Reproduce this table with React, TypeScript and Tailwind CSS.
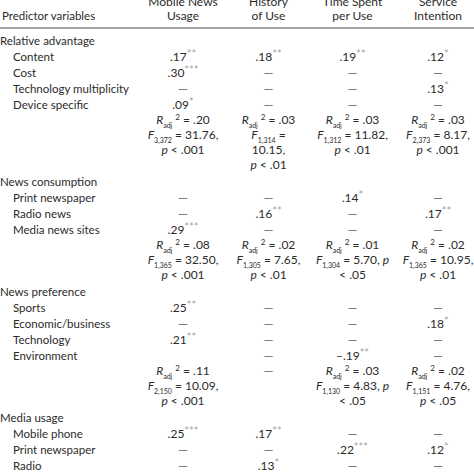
import React from "react";

const COLS = "grid grid-cols-[140px_86px_85px_83px_88px]";

function Dash() {
  return <span className="font-bold text-[#7d7d7d]">—</span>;
}

function Val({ v }: { v: string }) {
  if (v === "") return <span />;
  if (v === "—") return <Dash />;
  const m = v.match(/^([^*]*)(\**)$/);
  const num = m ? m[1] : v;
  const stars = m ? m[2] : "";
  return (
    <span>
      {num}
      {stars && (
        <span className="relative -top-[3px] text-[11px] leading-none text-[#a5a5a5]">{stars}</span>
      )}
    </span>
  );
}

function R({ v }: { v: string }) {
  return (
    <span>
      <i>R</i>
      <span className="relative top-[4px] text-[7px] leading-none">adj</span>
      <span className="relative -top-[4px] ml-[3px] text-[8px] leading-none">2</span> = {v}
    </span>
  );
}

function F({ s, children }: { s: string; children: React.ReactNode }) {
  return (
    <span>
      <i>F</i>
      <span className="relative top-[4px] text-[7px] leading-none">{s}</span> {children}
    </span>
  );
}

function P({ t }: { t: string }) {
  return (
    <span>
      <i>p</i> {t}
    </span>
  );
}

type Section = {
  title: string;
  rows: string[][];
  stats: React.ReactNode[][];
};

const sections: Section[] = [
  {
    title: "Relative advantage",
    rows: [
      ["Content", ".17**", ".18**", ".19**", ".12*"],
      ["Cost", ".30***", "—", "—", "—"],
      ["Technology multiplicity", "—", "—", "—", ".13*"],
      ["Device specific", ".09*", "—", "—", "—"],
    ],
    stats: [
      [<R v=".20" />, <F s="3,372">= 31.76,</F>, <P t="< .001" />],
      [<R v=".03" />, <F s="1,314">=</F>, <span>10.15,</span>, <P t="< .01" />],
      [<R v=".03" />, <F s="1,312">= 11.82,</F>, <P t="< .01" />],
      [<R v=".03" />, <F s="2,373">= 8.17,</F>, <P t="< .001" />],
    ],
  },
  {
    title: "News consumption",
    rows: [
      ["Print newspaper", "—", "—", ".14*", "—"],
      ["Radio news", "—", ".16**", "—", ".17**"],
      ["Media news sites", ".29***", "—", "—", "—"],
    ],
    stats: [
      [<R v=".08" />, <F s="1,365">= 32.50,</F>, <P t="< .001" />],
      [<R v=".02" />, <F s="1,305">= 7.65,</F>, <P t="< .01" />],
      [
        <R v=".01" />,
        <F s="1,304">
          = 5.70, <i>p</i>
        </F>,
        <span>&lt; .05</span>,
      ],
      [<R v=".02" />, <F s="1,365">= 10.95,</F>, <P t="< .01" />],
    ],
  },
  {
    title: "News preference",
    rows: [
      ["Sports", ".25**", "—", "—", "—"],
      ["Economic/business", "—", "—", "—", ".18*"],
      ["Technology", ".21**", "—", "—", "—"],
      ["Environment", "", "—", "–.19**", "—"],
    ],
    stats: [
      [<R v=".11" />, <F s="2,150">= 10.09,</F>, <P t="< .001" />],
      [<Dash />],
      [
        <R v=".03" />,
        <F s="1,130">
          = 4.83, <i>p</i>
        </F>,
        <span>&lt; .05</span>,
      ],
      [<R v=".02" />, <F s="1,151">= 4.76,</F>, <P t="< .05" />],
    ],
  },
  {
    title: "Media usage",
    rows: [
      ["Mobile phone", ".25***", ".17**", "—", "—"],
      ["Print newspaper", "—", "—", ".22***", ".12*"],
      ["Radio", "—", ".13*", "—", "—"],
    ],
    stats: [],
  },
];

const headers: [string, string][] = [
  ["Mobile News", "Usage"],
  ["History", "of Use"],
  ["Time Spent", "per Use"],
  ["Service", "Intention"],
];

export default function App() {
  return (
    <div className="h-[474px] w-[474px] overflow-hidden bg-white font-[Lato,sans-serif] text-[12px] text-[#2b2b2b]">
      <div className="-mt-[5px] flex w-[482px] flex-col">
        {/* header */}
        <div className={`${COLS} pb-[4px] leading-[14px]`}>
          <div className="flex flex-col pl-[2px] text-[11.5px]">
            <span>&nbsp;</span>
            <span>Predictor variables</span>
          </div>
          {headers.map(([a, b]) => (
            <div key={a} className="flex flex-col items-center whitespace-nowrap">
              <span>{a}</span>
              <span>{b}</span>
            </div>
          ))}
        </div>
        <div className="h-[2px] w-full bg-[#a3a3a3]" />
        <div className="mt-[4px] flex flex-col">
          {sections.map((sec) => (
            <div key={sec.title} className="flex flex-col">
              <div className={`${COLS} h-4 leading-4`}>
                <div className="whitespace-nowrap text-[11.5px]">{sec.title}</div>
              </div>
              {sec.rows.map((r) => (
                <div key={r[0]} className={`${COLS} h-4 leading-4`}>
                  <div className="whitespace-nowrap pl-[13px] text-[11.5px]">{r[0]}</div>
                  {r.slice(1).map((v, i) => (
                    <div key={i} className="text-center whitespace-nowrap">
                      <Val v={v} />
                    </div>
                  ))}
                </div>
              ))}
              {sec.stats.length > 0 && (
                <div className={`${COLS} -mt-[1px] pb-[2px] leading-[15px]`}>
                  <div />
                  {sec.stats.map((lines, i) => (
                    <div key={i} className="flex flex-col items-center whitespace-nowrap">
                      {lines.map((l, j) => (
                        <div key={j}>{l}</div>
                      ))}
                    </div>
                  ))}
                </div>
              )}
            </div>
          ))}
        </div>
      </div>
    </div>
  );
}
